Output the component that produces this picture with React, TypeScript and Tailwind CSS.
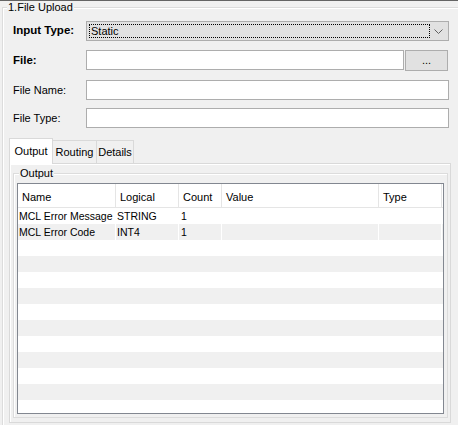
import React from "react";

type Row = { name: string; logical: string; count: string; value: string; type: string };

const columns = [
  { label: "Name", w: "w-[98px]" },
  { label: "Logical", w: "w-[63px]" },
  { label: "Count", w: "w-[43px]" },
  { label: "Value", w: "w-[157px]" },
  { label: "Type", w: "w-[63px]" },
];

const rows: Row[] = [
  { name: "MCL Error Message", logical: "STRING", count: "1", value: "", type: "" },
  { name: "MCL Error Code", logical: "INT4", count: "1", value: "", type: "" },
];

const emptyRows = Array.from({ length: 12 }, (_, i) => i + rows.length);

function TextBox({ className = "" }: { className?: string }) {
  return <div className={`h-[20px] border border-[#adadad] bg-white ${className}`} />;
}

function Chevron() {
  return (
    <svg width="9" height="5" viewBox="0 0 9 5" fill="none">
      <polyline points="0.5,0.5 4.5,4.5 8.5,0.5" stroke="#606060" strokeWidth="1" />
    </svg>
  );
}

export default function App() {
  return (
    <div className="w-[458px] h-[425px] overflow-hidden bg-[#f0f0f0] border-t border-[#646464] font-['Liberation_Sans',Arial,sans-serif] text-[11px] text-black">
      {/* 1.File Upload group */}
      <div className="relative ml-[2px] mt-[6px] w-[470px] h-[440px] border border-[#dcdcdc] shadow-[inset_1px_1px_0_#fff] pt-[13px] pl-[6px]">
        <span className="absolute left-[4px] -top-[7px] bg-[#f0f0f0] px-[1px] leading-[13px]">1.File Upload</span>

        <div className="flex items-center h-[20px] pl-[4px]">
          <span className="w-[73px] font-bold text-[11.5px]">Input Type:</span>
          <div className="w-[363px] h-[20px] border border-[#adadad] bg-[#e1e1e1] flex p-[2px]">
            <div className="w-[341px] border border-dotted border-black flex items-center pl-[1px] leading-none">Static</div>
            <div className="flex-1 flex items-center justify-center pl-[1px] pt-[1px]">
              <Chevron />
            </div>
          </div>
        </div>

        <div className="flex items-center h-[21px] mt-[9px] pl-[4px]">
          <span className="w-[73px] font-bold text-[11.5px]">File:</span>
          <TextBox className="w-[318px] self-start" />
          <button className="ml-[1px] w-[43px] h-[21px] border border-[#adadad] bg-[#e1e1e1] flex items-center justify-center leading-none">
            ...
          </button>
        </div>

        <div className="flex items-center h-[20px] mt-[9px] pl-[4px]">
          <span className="w-[73px]">File Name:</span>
          <TextBox className="w-[363px]" />
        </div>

        <div className="flex items-center h-[20px] mt-[8px] pl-[4px]">
          <span className="w-[73px]">File Type:</span>
          <TextBox className="w-[363px]" />
        </div>

        {/* Tab control */}
        <div className="mt-[10px] w-[442px]">
          <div className="relative z-10 flex items-end h-[25px]">
            <div className="h-[26px] mb-[-1px] w-[44px] border border-b-0 border-[#d9d9d9] bg-white flex items-center justify-center">
              Output
            </div>
            <div className="h-[23px] w-[44px] border-t border-r border-[#d9d9d9] flex items-center justify-center">
              Routing
            </div>
            <div className="h-[23px] w-[37px] border-t border-r border-[#d9d9d9] flex items-center justify-center">
              Details
            </div>
          </div>

          <div className="h-[260px] border border-[#d9d9d9] shadow-[inset_1px_1px_0_#fff] pt-[9px] pl-[3px]">
            {/* Output group */}
            <div className="relative w-[435px] h-[245px] border border-[#dcdcdc] shadow-[inset_1px_1px_0_#fff] pt-[9px] pl-[3px]">
              <span className="absolute left-[5px] -top-[7px] bg-[#f0f0f0] px-[1px] leading-[13px]">Output</span>

              <div className="w-[427px] h-[231px] border border-[#828790] bg-white overflow-hidden flex flex-col">
                <div className="flex h-[24px] shrink-0 border-b border-[#e5e5e5]">
                  {columns.map((c) => (
                    <div key={c.label} className={`${c.w} border-r border-[#e5e5e5] pl-[4px] pt-[4px] flex items-center`}>
                      {c.label}
                    </div>
                  ))}
                </div>

                {rows.map((r, i) => (
                  <div
                    key={r.name}
                    className={`flex h-[16px] shrink-0 text-[10.5px] leading-[16px] ${i % 2 === 1 ? "bg-[#f0f0f0]" : "bg-white"}`}
                  >
                    <div className="w-[98px] border-r border-white pl-[1px] whitespace-nowrap overflow-hidden">{r.name}</div>
                    <div className="w-[63px] border-r border-white pl-[1px]">{r.logical}</div>
                    <div className="w-[43px] border-r border-white pl-[2px]">{r.count}</div>
                    <div className="w-[157px] border-r border-white pl-[1px]">{r.value}</div>
                    <div className="w-[63px] border-r border-white pl-[1px]">{r.type}</div>
                  </div>
                ))}

                {emptyRows.map((i) => (
                  <div key={i} className={`h-[16px] shrink-0 ${i % 2 === 1 ? "bg-[#f0f0f0]" : "bg-white"}`} />
                ))}
              </div>
            </div>
          </div>
        </div>
      </div>
    </div>
  );
}
